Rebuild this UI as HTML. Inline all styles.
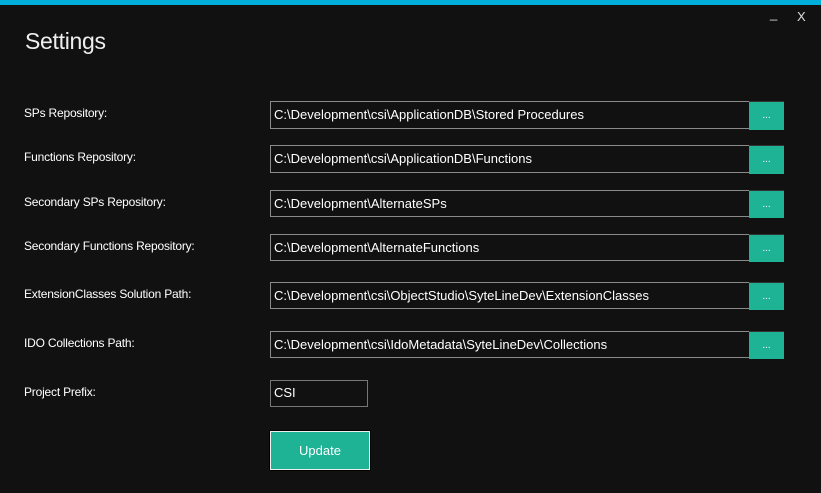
<!DOCTYPE html>
<html><head><meta charset="utf-8"><style>
html,body{margin:0;padding:0}
body{width:821px;height:493px;background:#111;position:relative;overflow:hidden;font-family:"Liberation Sans",sans-serif;color:#fff}
.top{position:absolute;left:0;top:0;width:821px;height:5px;background:#00aedb}
.title{position:absolute;left:25px;top:28px;font-size:23px;color:#eee;letter-spacing:-0.3px}
.ctl{position:absolute;top:9px;font-size:13px;color:#ddd}
.lbl{position:absolute;left:24px;font-size:12px;color:#fff;letter-spacing:-0.2px}
.box{position:absolute;left:270px;height:26px;border:1px solid #8a8a8a;background:#111;font-size:13px;line-height:25px;padding-left:3px;box-sizing:border-box;width:480px;color:#fff}
.btn{position:absolute;left:749px;width:35px;height:28px;background:#1db394;color:#fff;font-size:10px;text-align:center;line-height:28px;border-top:1px solid #333}
.csi{position:absolute;left:270px;top:380px;width:98px;height:27px;border:1px solid #777;box-sizing:border-box;font-size:13px;line-height:24px;padding-left:3px}
.upd{position:absolute;left:270px;top:431px;width:100px;height:39px;background:#1db394;border:1px solid #eee;box-sizing:border-box;text-align:center;line-height:37px;font-size:13px;outline:1px solid #000}
</style></head><body>
<div class="top"></div>
<div class="title">Settings</div>
<div class="ctl" style="left:770px;top:6px">_</div>
<div class="ctl" style="left:797px">X</div>

<div class="lbl" style="top:106px">SPs Repository:</div>
<div class="box" style="top:101px;height:28px;line-height:26px">C:\Development\csi\ApplicationDB\Stored Procedures</div>
<div class="btn" style="top:101px">...</div>

<div class="lbl" style="top:150px">Functions Repository:</div>
<div class="box" style="top:145px;height:28px;line-height:26px">C:\Development\csi\ApplicationDB\Functions</div>
<div class="btn" style="top:145px">...</div>

<div class="lbl" style="top:195px">Secondary SPs Repository:</div>
<div class="box" style="top:190px;height:27px;line-height:25px">C:\Development\AlternateSPs</div>
<div class="btn" style="top:190px;height:27px;line-height:27px">...</div>

<div class="lbl" style="top:239px">Secondary Functions Repository:</div>
<div class="box" style="top:234px;height:27px;line-height:25px">C:\Development\AlternateFunctions</div>
<div class="btn" style="top:234px;height:27px;line-height:27px">...</div>

<div class="lbl" style="top:287px">ExtensionClasses Solution Path:</div>
<div class="box" style="top:282px;height:27px;line-height:25px">C:\Development\csi\ObjectStudio\SyteLineDev\ExtensionClasses</div>
<div class="btn" style="top:282px;height:27px;line-height:27px">...</div>

<div class="lbl" style="top:336px">IDO Collections Path:</div>
<div class="box" style="top:331px;height:27px;line-height:25px">C:\Development\csi\IdoMetadata\SyteLineDev\Collections</div>
<div class="btn" style="top:331px;height:27px;line-height:27px">...</div>

<div class="lbl" style="top:385px">Project Prefix:</div>
<div class="csi">CSI</div>
<div class="upd">Update</div>
</body></html>
